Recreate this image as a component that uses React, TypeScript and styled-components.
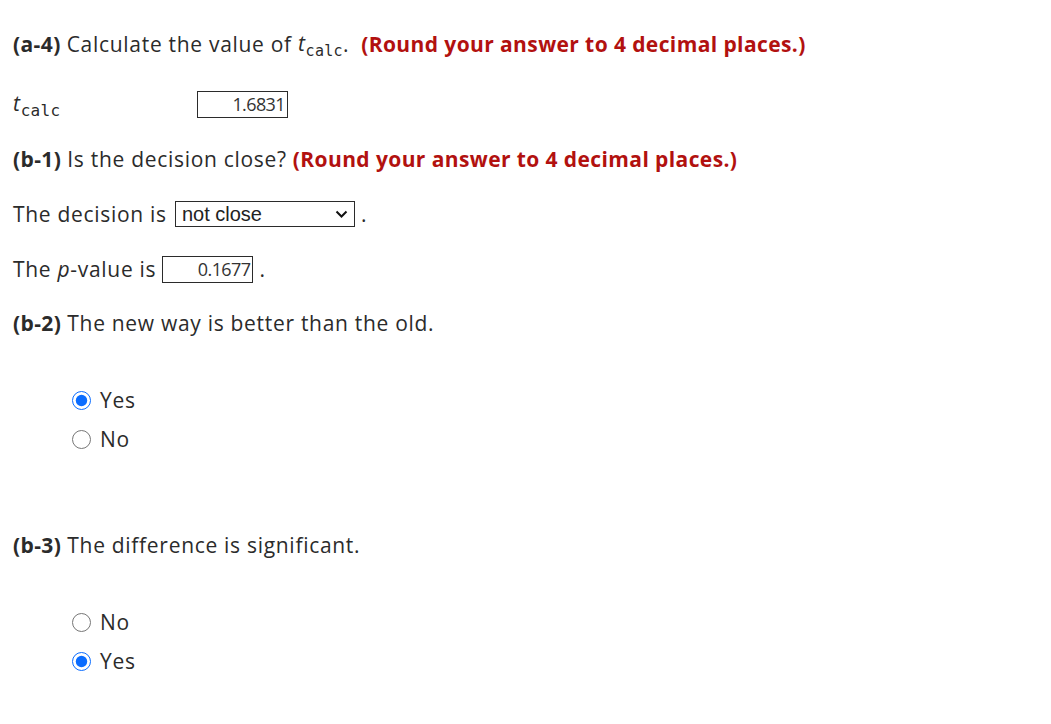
import React from 'react';
import styled, { createGlobalStyle } from 'styled-components';

const GlobalStyle = createGlobalStyle`
  body {
    margin: 0;
    background: #ffffff;
    font-family: "Open Sans", "Noto Sans", sans-serif;
    color: #2b2b2b;
  }
`;

const Page = styled.div`
  display: flex;
  flex-direction: column;
  padding: 30px 0 40px 13px;
`;

const Line = styled.div<{ $top?: number }>`
  display: flex;
  align-items: center;
  height: 28px;
  margin-top: ${(p) => p.$top ?? 0}px;
  font-size: 21px;
  letter-spacing: 0.7px;
  line-height: 28px;
  white-space: nowrap;
`;

const Tag = styled.b`
  font-weight: 700;
  letter-spacing: 0.4px;
  margin-right: 6px;
`;

const Hint = styled.b<{ $gap?: number }>`
  font-weight: 700;
  letter-spacing: 0.4px;
  color: #b2110f;
  margin-left: ${(p) => p.$gap ?? 6}px;
`;

const Var = styled.span`
  font-style: italic;
`;

const Sub = styled.span<{ $size?: number }>`
  font-family: "DejaVu Sans Mono", "Liberation Mono", monospace;
  font-size: ${(p) => p.$size ?? 15}px;
  letter-spacing: 0.3px;
  position: relative;
  top: 5px;
`;

const Label = styled.span<{ $width?: number }>`
  display: inline-block;
  width: ${(p) => (p.$width ? `${p.$width}px` : 'auto')};
`;

const ValueBox = styled.span`
  display: inline-flex;
  align-items: center;
  justify-content: flex-end;
  box-sizing: border-box;
  width: 91px;
  height: 27px;
  padding: 0 2px;
  border: 1px solid #2b2b2b;
  font-size: 18px;
  letter-spacing: -0.6px;
  color: #333;
`;

const SelectBox = styled.span`
  display: inline-flex;
  align-items: center;
  justify-content: space-between;
  box-sizing: border-box;
  width: 180px;
  height: 26px;
  margin-left: 2px;
  padding: 0 6px 0 6px;
  border: 1px solid #2b2b2b;
  font-family: "Liberation Sans", Arial, sans-serif;
  font-size: 20px;
  letter-spacing: 0;
  color: #222;
`;

const Dot = styled.span`
  margin-left: 6px;
`;

const Options = styled.div<{ $top: number }>`
  display: flex;
  flex-direction: column;
  gap: 11px;
  margin-top: ${(p) => p.$top}px;
  padding-left: 59px;
`;

const Option = styled.label`
  display: flex;
  align-items: center;
  gap: 9px;
  height: 28px;
  font-size: 21px;
  letter-spacing: 0.7px;
`;

const Radio = styled.input`
  width: 19px;
  height: 19px;
  margin: 0;
  accent-color: #0a6cff;
`;

const Chevron = () => (
  <svg width="13" height="9" viewBox="0 0 13 9">
    <path d="M1.5 1.5 L6.5 6.5 L11.5 1.5" fill="none" stroke="#111" strokeWidth="2" />
  </svg>
);

const Calc = ({ size }: { size?: number }) => (
  <span>
    <Var>t</Var>
    <Sub $size={size}>calc</Sub>
  </span>
);

export default function App() {
  return (
    <>
      <GlobalStyle />
      <Page>
        <Line>
          <Tag>(a-4)</Tag> Calculate the value of&nbsp;<Calc />.
          <Hint $gap={12}>(Round your answer to 4 decimal places.)</Hint>
        </Line>
        <Line $top={32}>
          <Label $width={184}>
            <Calc size={16} />
          </Label>
          <ValueBox>1.6831</ValueBox>
        </Line>
        <Line $top={27}>
          <Tag>(b-1)</Tag> Is the decision close?
          <Hint>(Round your answer to 4 decimal places.)</Hint>
        </Line>
        <Line $top={27}>
          <Label>The decision is&nbsp;</Label>
          <SelectBox>
            not close
            <Chevron />
          </SelectBox>
          <Dot>.</Dot>
        </Line>
        <Line $top={27}>
          <Label>
            The <Var>p</Var>-value is&nbsp;
          </Label>
          <ValueBox>0.1677</ValueBox>
          <Dot>.</Dot>
        </Line>
        <Line $top={26}>
          <Tag>(b-2)</Tag> The new way is better than the old.
        </Line>
        <Options $top={49}>
          <Option>
            <Radio type="radio" name="b2" defaultChecked />
            Yes
          </Option>
          <Option>
            <Radio type="radio" name="b2" />
            No
          </Option>
        </Options>
        <Line $top={78}>
          <Tag>(b-3)</Tag> The difference is significant.
        </Line>
        <Options $top={49}>
          <Option>
            <Radio type="radio" name="b3" />
            No
          </Option>
          <Option>
            <Radio type="radio" name="b3" defaultChecked />
            Yes
          </Option>
        </Options>
      </Page>
    </>
  );
}
